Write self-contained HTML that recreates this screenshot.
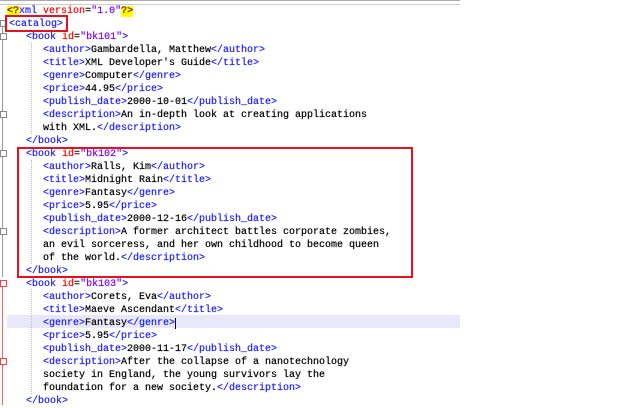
<!DOCTYPE html>
<html><head><style>
body{margin:0;width:624px;height:408px;background:#fff;overflow:hidden;position:relative;font-family:"Liberation Mono",monospace;font-size:10px}
.top{position:absolute;left:0;top:0;width:460px;height:3px;border-top:1px solid #aaa;border-bottom:1px solid #ccc}
.l{position:absolute;left:9px;height:13px;line-height:13px;margin-top:1px;white-space:pre;color:#000;-webkit-text-stroke:0.2px #000}
.t{color:#2020ff;-webkit-text-stroke:0.2px #2020ff}.a{color:#ff0000;-webkit-text-stroke:0.2px #f00}.v{color:#8000ff;-webkit-text-stroke:0.2px #8000ff}.q{background:#ffff00;color:#ff0000}
.hl{position:absolute;left:7px;top:315px;width:453px;height:13px;background:#e8e8fa}
.box{position:absolute;border:2px solid #e8101c}
.gut{position:absolute;left:2px;width:1px;background:#999}
.fb{position:absolute;left:0;width:5px;height:5px;border:1px solid #888;background:#fff}
.g{position:absolute;width:0;border-left:1px dotted #bbb}
</style></head><body>
<div class="top"></div>
<div class="hl"></div>
<div class="gut" style="top:22px;height:255px"></div>
<div class="gut" style="top:283px;height:122px;background:#e66"></div>
<div class="fb" style="top:20px"></div>
<div class="fb" style="top:33px"></div>
<div class="fb" style="top:111px"></div>
<div class="fb" style="top:150px"></div>
<div class="fb" style="top:228px"></div>
<div class="fb" style="top:280px;border-color:#e44"></div>
<div class="fb" style="top:358px;border-color:#e44"></div>
<div class="g" style="left:31px;top:43px;height:91px"></div>
<div class="g" style="left:31px;top:160px;height:104px"></div>
<div class="g" style="left:31px;top:289px;height:105px"></div>

<div class="l" style="top:4px;left:7px"><span class="q">&lt;?</span><span class="t">xml</span> <span class="a">version</span>=<span class="v">"1.0"</span><span class="q">?&gt;</span></div>
<div class="l" style="top:17px"><span class="t">&lt;catalog&gt;</span></div>
<div class="l" style="top:30px;left:26px"><span class="t">&lt;book</span> <span class="a">id</span>=<span class="v">"bk101"</span><span class="t">&gt;</span></div>
<div class="l" style="top:43px;left:43px"><span class="t">&lt;author&gt;</span>Gambardella, Matthew<span class="t">&lt;/author&gt;</span></div>
<div class="l" style="top:56px;left:43px"><span class="t">&lt;title&gt;</span>XML Developer's Guide<span class="t">&lt;/title&gt;</span></div>
<div class="l" style="top:69px;left:43px"><span class="t">&lt;genre&gt;</span>Computer<span class="t">&lt;/genre&gt;</span></div>
<div class="l" style="top:82px;left:43px"><span class="t">&lt;price&gt;</span>44.95<span class="t">&lt;/price&gt;</span></div>
<div class="l" style="top:95px;left:43px"><span class="t">&lt;publish_date&gt;</span>2000-10-01<span class="t">&lt;/publish_date&gt;</span></div>
<div class="l" style="top:108px;left:43px"><span class="t">&lt;description&gt;</span>An in-depth look at creating applications</div>
<div class="l" style="top:121px;left:43px">with XML.<span class="t">&lt;/description&gt;</span></div>
<div class="l" style="top:134px;left:26px"><span class="t">&lt;/book&gt;</span></div>
<div class="l" style="top:147px;left:26px"><span class="t">&lt;book</span> <span class="a">id</span>=<span class="v">"bk102"</span><span class="t">&gt;</span></div>
<div class="l" style="top:160px;left:43px"><span class="t">&lt;author&gt;</span>Ralls, Kim<span class="t">&lt;/author&gt;</span></div>
<div class="l" style="top:173px;left:43px"><span class="t">&lt;title&gt;</span>Midnight Rain<span class="t">&lt;/title&gt;</span></div>
<div class="l" style="top:186px;left:43px"><span class="t">&lt;genre&gt;</span>Fantasy<span class="t">&lt;/genre&gt;</span></div>
<div class="l" style="top:199px;left:43px"><span class="t">&lt;price&gt;</span>5.95<span class="t">&lt;/price&gt;</span></div>
<div class="l" style="top:212px;left:43px"><span class="t">&lt;publish_date&gt;</span>2000-12-16<span class="t">&lt;/publish_date&gt;</span></div>
<div class="l" style="top:225px;left:43px"><span class="t">&lt;description&gt;</span>A former architect battles corporate zombies,</div>
<div class="l" style="top:238px;left:43px">an evil sorceress, and her own childhood to become queen</div>
<div class="l" style="top:251px;left:43px">of the world.<span class="t">&lt;/description&gt;</span></div>
<div class="l" style="top:264px;left:26px"><span class="t">&lt;/book&gt;</span></div>
<div class="l" style="top:277px;left:26px"><span class="t">&lt;book</span> <span class="a">id</span>=<span class="v">"bk103"</span><span class="t">&gt;</span></div>
<div class="l" style="top:290px;left:43px"><span class="t">&lt;author&gt;</span>Corets, Eva<span class="t">&lt;/author&gt;</span></div>
<div class="l" style="top:303px;left:43px"><span class="t">&lt;title&gt;</span>Maeve Ascendant<span class="t">&lt;/title&gt;</span></div>
<div class="l" style="top:316px;left:43px"><span class="t">&lt;genre&gt;</span>Fantasy<span class="t">&lt;/genre&gt;</span><span style="border-left:1px solid #000"></span></div>
<div class="l" style="top:329px;left:43px"><span class="t">&lt;price&gt;</span>5.95<span class="t">&lt;/price&gt;</span></div>
<div class="l" style="top:342px;left:43px"><span class="t">&lt;publish_date&gt;</span>2000-11-17<span class="t">&lt;/publish_date&gt;</span></div>
<div class="l" style="top:355px;left:43px"><span class="t">&lt;description&gt;</span>After the collapse of a nanotechnology</div>
<div class="l" style="top:368px;left:43px">society in England, the young survivors lay the</div>
<div class="l" style="top:381px;left:43px">foundation for a new society.<span class="t">&lt;/description&gt;</span></div>
<div class="l" style="top:394px;left:26px"><span class="t">&lt;/book&gt;</span></div>

<div class="box" style="left:5px;top:15px;width:59px;height:13px"></div>
<div class="box" style="left:17px;top:147px;width:392px;height:127px"></div>
</body></html>
